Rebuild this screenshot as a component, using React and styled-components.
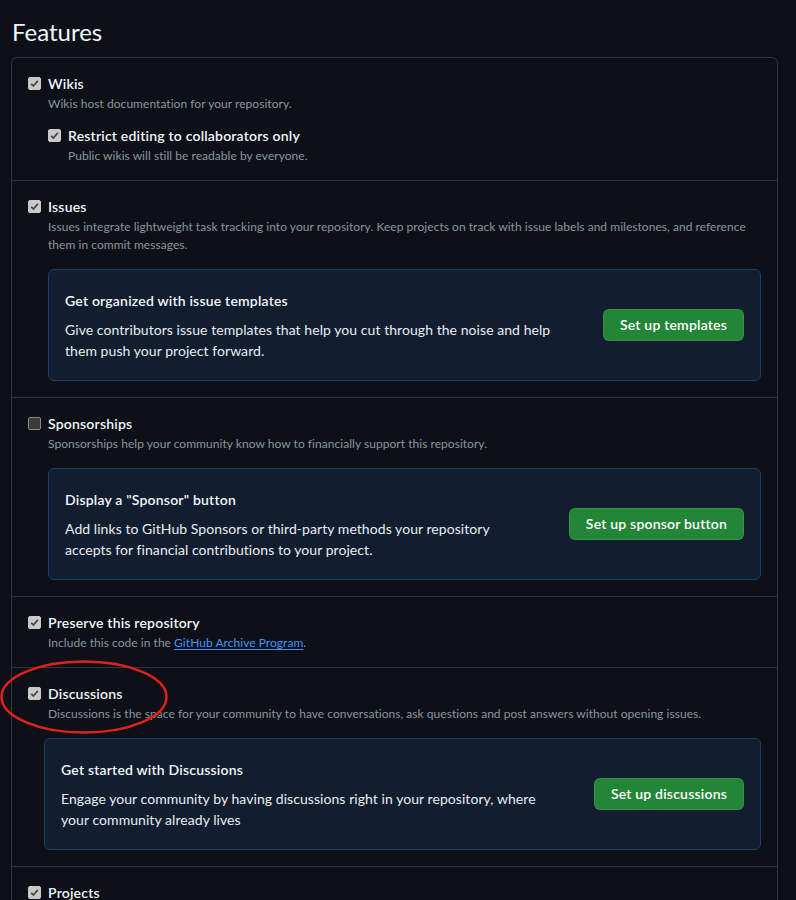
import styled, { createGlobalStyle } from "styled-components";

const GlobalStyle = createGlobalStyle`
  html, body {
    margin: 0;
    padding: 0;
    background: #0d1117;
  }
  body {
    font-family: "Segoe UI", Lato, "Noto Sans", sans-serif;
    color: #e6edf3;
  }
`;

const features = [
  {
    id: "wikis",
    title: "Wikis",
    checked: true,
    description: "Wikis host documentation for your repository.",
    nested: {
      title: "Restrict editing to collaborators only",
      checked: true,
      description: "Public wikis will still be readable by everyone."
    }
  },
  {
    id: "issues",
    title: "Issues",
    checked: true,
    description:
      "Issues integrate lightweight task tracking into your repository. Keep projects on track with issue labels and milestones, and reference them in commit messages.",
    card: {
      title: "Get organized with issue templates",
      text: "Give contributors issue templates that help you cut through the noise and help them push your project forward.",
      action: "Set up templates"
    }
  },
  {
    id: "sponsorships",
    title: "Sponsorships",
    checked: false,
    description: "Sponsorships help your community know how to financially support this repository.",
    card: {
      title: 'Display a "Sponsor" button',
      text: "Add links to GitHub Sponsors or third-party methods your repository accepts for financial contributions to your project.",
      action: "Set up sponsor button"
    }
  },
  {
    id: "preserve",
    title: "Preserve this repository",
    checked: true,
    archive: true
  },
  {
    id: "discussions",
    title: "Discussions",
    checked: true,
    highlighted: true,
    description:
      "Discussions is the space for your community to have conversations, ask questions and post answers without opening issues.",
    card: {
      title: "Get started with Discussions",
      text: "Engage your community by having discussions right in your repository, where your community already lives",
      action: "Set up discussions",
      shifted: true
    }
  },
  {
    id: "projects",
    title: "Projects",
    checked: true,
    description: "Projects on GitHub are created at the repository owner's level."
  }
];

const Check = ({ checked }) => (
  <CheckBox $checked={checked}>
    {checked && (
      <svg width="11" height="11" viewBox="0 0 11 11">
        <path d="M2.2 5.8 L4.4 8 L8.8 2.8" fill="none" stroke="#4a4a4a" strokeWidth="1.8" />
      </svg>
    )}
  </CheckBox>
);

const App = () => {
  return (
    <>
      <GlobalStyle />
      <Page>
        <Heading>Features</Heading>
        <Panel>
          {features.map(f => (
            <Section key={f.id}>
              <OptionRow>
                <Check checked={f.checked} />
                <OptionBody>
                  <OptionTitle>{f.title}</OptionTitle>
                  {f.archive ? (
                    <OptionNote>
                      Include this code in the <Link href="#">GitHub Archive Program</Link>.
                    </OptionNote>
                  ) : (
                    <OptionNote>{f.description}</OptionNote>
                  )}
                </OptionBody>
                {f.highlighted && (
                  <Annotation width="172" height="78" viewBox="0 0 172 78">
                    <ellipse
                      cx="85"
                      cy="38"
                      rx="82.5"
                      ry="35.5"
                      fill="none"
                      stroke="#e3211c"
                      strokeWidth="2.5"
                    />
                  </Annotation>
                )}
              </OptionRow>

              {f.nested && (
                <NestedRow>
                  <Check checked={f.nested.checked} />
                  <OptionBody>
                    <OptionTitle>{f.nested.title}</OptionTitle>
                    <OptionNote>{f.nested.description}</OptionNote>
                  </OptionBody>
                </NestedRow>
              )}

              {f.card && (
                <PromoCard $shifted={f.card.shifted}>
                  <PromoText>
                    <PromoTitle>{f.card.title}</PromoTitle>
                    <PromoCopy>{f.card.text}</PromoCopy>
                  </PromoText>
                  <GreenButton type="button">{f.card.action}</GreenButton>
                </PromoCard>
              )}
            </Section>
          ))}
        </Panel>
      </Page>
    </>
  );
};

const Page = styled.div`
  padding: 14px 18px 40px 11px;
`;

const Heading = styled.h2`
  margin: 0 0 7px 1px;
  font-size: 24px;
  line-height: 36px;
  font-weight: 400;
  color: #f0f6fc;
`;

const Panel = styled.div`
  border: 1px solid #30363d;
  border-radius: 6px;
`;

const Section = styled.div`
  padding: 16px;
  border-top: 1px solid #30363d;

  &:first-child {
    border-top: none;
  }
`;

const OptionRow = styled.div`
  position: relative;
  display: flex;
  align-items: flex-start;
  gap: 7px;
`;

const NestedRow = styled(OptionRow)`
  margin: 14px 0 0 20px;
`;

const CheckBox = styled.span`
  flex: none;
  width: 13px;
  height: 13px;
  margin-top: 3px;
  box-sizing: border-box;
  border-radius: 2px;
  display: flex;
  align-items: center;
  justify-content: center;
  background: ${p => (p.$checked ? "#c9c9c9" : "#3a3a3a")};
  border: 1px solid ${p => (p.$checked ? "#c9c9c9" : "#8a8a8a")};
`;

const OptionBody = styled.div`
  display: flex;
  flex-direction: column;
  min-width: 0;
`;

const OptionTitle = styled.div`
  font-size: 14px;
  line-height: 20px;
  font-weight: 600;
  letter-spacing: 0.2px;
  color: #f0f6fc;
`;

const OptionNote = styled.div`
  padding-top: 1px;
  margin-bottom: -1px;
  font-size: 12px;
  line-height: 18px;
  letter-spacing: 0.04px;
  color: #8b949e;
`;

const Link = styled.a`
  color: #4493f8;
  text-decoration: underline;
  text-underline-offset: 2px;
`;

const Annotation = styled.svg`
  position: absolute;
  left: -29px;
  top: -25px;
  pointer-events: none;
`;

const PromoCard = styled.div`
  display: flex;
  align-items: center;
  gap: 40px;
  margin: 16px 0 0 ${p => (p.$shifted ? "16px" : "20px")};
  padding: 20px 16px 19px;
  background: #121d2f;
  border: 1px solid #1d3d69;
  border-radius: 6px;
`;

const PromoText = styled.div`
  flex: 1;
  min-width: 0;
`;

const PromoTitle = styled.div`
  font-size: 14px;
  line-height: 21px;
  font-weight: 600;
  letter-spacing: 0.2px;
  color: #f0f6fc;
  margin-bottom: 8px;
`;

const PromoCopy = styled.div`
  font-size: 14px;
  line-height: 21px;
  letter-spacing: 0.06px;
  color: #e6edf3;
`;

const GreenButton = styled.button`
  flex: none;
  height: 32px;
  margin-top: -2px;
  padding: 0 16px;
  font-family: inherit;
  font-size: 14px;
  font-weight: 600;
  letter-spacing: 0.2px;
  color: #ffffff;
  background: #238636;
  border: 1px solid rgba(240, 246, 252, 0.1);
  border-radius: 6px;
  cursor: pointer;
`;

export default App;
